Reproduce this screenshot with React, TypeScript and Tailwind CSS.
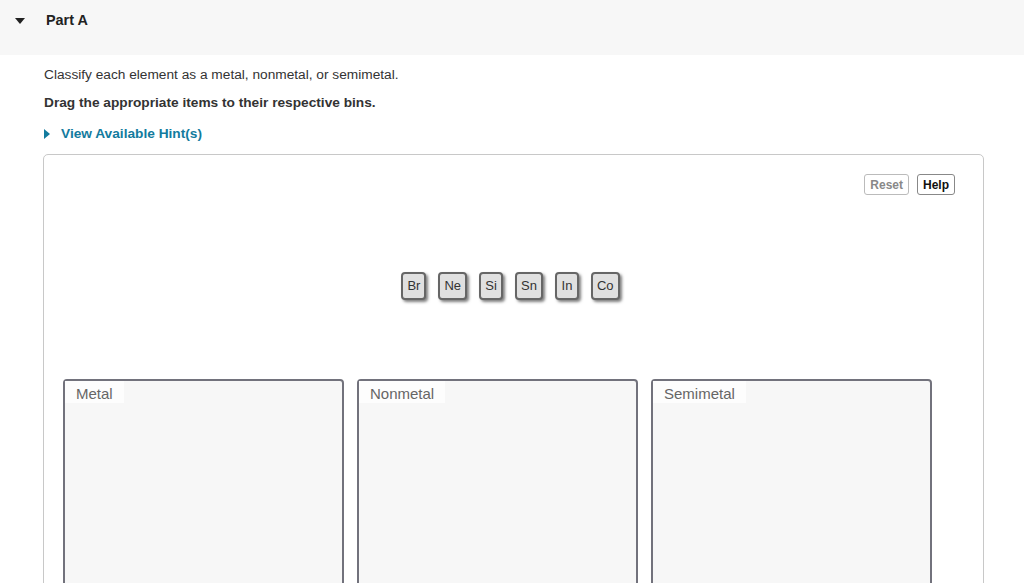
import React from "react";

const tiles = ["Br", "Ne", "Si", "Sn", "In", "Co"];
const bins = ["Metal", "Nonmetal", "Semimetal"];

export default function App() {
  return (
    <div className="w-[1024px] h-[583px] overflow-hidden bg-white font-['Liberation_Sans',Arial,sans-serif] text-[#333]">
      <div className="h-[55px] bg-[#f7f7f7] flex items-start pt-[12px]">
        <svg width="10" height="6" viewBox="0 0 10 6" className="ml-[15px] mt-[6px]">
          <polygon points="0,0 10,0 5,6" fill="#222" />
        </svg>
        <span className="ml-[21px] text-[14.4px] font-bold text-[#222] leading-[17px]">Part A</span>
      </div>
      <div className="pl-[44px] pt-[12px]">
        <p className="text-[13.7px] leading-[16px]">Classify each element as a metal, nonmetal, or semimetal.</p>
        <p className="mt-[12px] text-[13.7px] leading-[16px] font-bold">Drag the appropriate items to their respective bins.</p>
        <div className="mt-[15px] flex items-center text-[13.7px] leading-[16px] font-bold text-[#137b9e]">
          <svg width="6" height="10" viewBox="0 0 6 10" className="mr-[11px]">
            <polygon points="0,0 6,5 0,10" fill="#137b9e" />
          </svg>
          <span>View Available Hint(s)</span>
        </div>
      </div>
      <div className="ml-[43px] mt-[12px] w-[941px] h-[600px] border border-[#c8c8c8] rounded-[5px] bg-white">
        <div className="flex justify-end gap-[8px] pr-[28px] pt-[19px]">
          <button className="h-[21px] px-[5px] border border-[#bbb] rounded-[3px] text-[12px] font-bold text-[#888] bg-white">Reset</button>
          <button className="h-[21px] px-[5px] border border-[#888] rounded-[3px] text-[12px] font-bold text-[#111] bg-white">Help</button>
        </div>
        <div className="flex justify-center gap-[12px] mt-[77px] pr-[6px]">
          {tiles.map((t) => (
            <div
              key={t}
              className="h-[28px] min-w-[24px] px-[4px] flex items-center justify-center border-2 border-[#666] rounded-[4px] bg-[#e0e0e0] text-[13px] text-[#333] shadow-[2px_2px_3px_rgba(0,0,0,0.5)]"
            >
              {t}
            </div>
          ))}
        </div>
        <div className="flex gap-[13px] pl-[19px] mt-[79px]">
          {bins.map((b) => (
            <div key={b} className="w-[281px] h-[300px] border-2 border-[#72727c] rounded-[4px] bg-[#f7f7f7]">
              <div className="inline-block bg-[#fdfdfd] px-[11px] h-[22px] leading-[26px] text-[15px] text-[#666]">{b}</div>
            </div>
          ))}
        </div>
      </div>
    </div>
  );
}
